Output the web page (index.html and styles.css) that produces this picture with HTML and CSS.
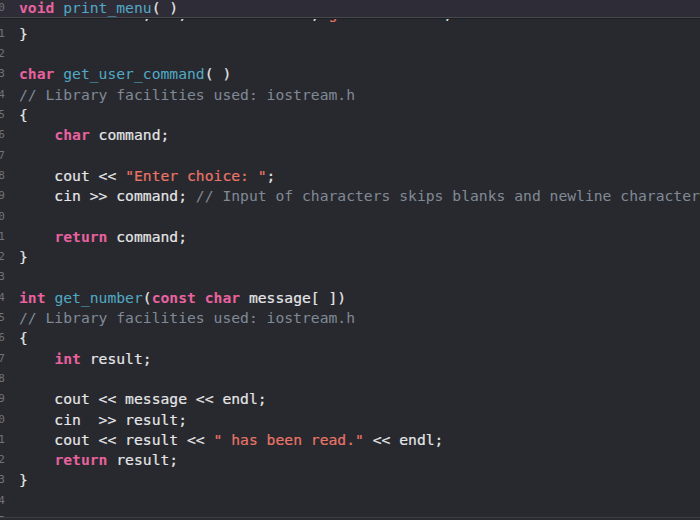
FILE: index.html
```html
<!DOCTYPE html>
<html>
<head>
<meta charset="utf-8">
<link rel="stylesheet" href="styles.css">
</head>
<body>
<div class="editor">
  <div class="sticky">
    <div class="row"><span class="ln">40</span><span class="src"><span class="kw">void</span> <span class="fn">print_menu</span>( )</span></div>
  </div>
  <div class="code">
    <div class="row partial"><span class="ln">40</span><span class="src">              ,   ,              , <span class="str">g</span>            ;</span></div>
    <div class="row"><span class="ln">41</span><span class="src">}</span></div>
    <div class="row"><span class="ln">42</span><span class="src"></span></div>
    <div class="row"><span class="ln">43</span><span class="src"><span class="kw">char</span> <span class="fn">get_user_command</span>( )</span></div>
    <div class="row"><span class="ln">44</span><span class="src"><span class="cm">// Library facilities used: iostream.h</span></span></div>
    <div class="row"><span class="ln">45</span><span class="src">{</span></div>
    <div class="row"><span class="ln">46</span><span class="src">    <span class="kw">char</span> command;</span></div>
    <div class="row"><span class="ln">47</span><span class="src"></span></div>
    <div class="row"><span class="ln">48</span><span class="src">    cout &lt;&lt; <span class="str">"Enter choice: "</span>;</span></div>
    <div class="row"><span class="ln">49</span><span class="src">    cin &gt;&gt; command; <span class="cm">// Input of characters skips blanks and newline characters</span></span></div>
    <div class="row"><span class="ln">50</span><span class="src"></span></div>
    <div class="row"><span class="ln">51</span><span class="src">    <span class="kw">return</span> command;</span></div>
    <div class="row"><span class="ln">52</span><span class="src">}</span></div>
    <div class="row"><span class="ln">53</span><span class="src"></span></div>
    <div class="row"><span class="ln">54</span><span class="src"><span class="kw">int</span> <span class="fn">get_number</span>(<span class="kw">const</span> <span class="kw">char</span> message[ ])</span></div>
    <div class="row"><span class="ln">55</span><span class="src"><span class="cm">// Library facilities used: iostream.h</span></span></div>
    <div class="row"><span class="ln">56</span><span class="src">{</span></div>
    <div class="row"><span class="ln">57</span><span class="src">    <span class="kw">int</span> result;</span></div>
    <div class="row"><span class="ln">58</span><span class="src"></span></div>
    <div class="row"><span class="ln">59</span><span class="src">    cout &lt;&lt; message &lt;&lt; endl;</span></div>
    <div class="row"><span class="ln">60</span><span class="src">    cin  &gt;&gt; result;</span></div>
    <div class="row"><span class="ln">61</span><span class="src">    cout &lt;&lt; result &lt;&lt; <span class="str">" has been read."</span> &lt;&lt; endl;</span></div>
    <div class="row"><span class="ln">62</span><span class="src">    <span class="kw">return</span> result;</span></div>
    <div class="row"><span class="ln">63</span><span class="src">}</span></div>
    <div class="row"><span class="ln">64</span><span class="src"></span></div>
    <div class="row"><span class="ln">65</span><span class="src"></span></div>
  </div>
  <div class="footer"></div>
</div>
</body>
</html>
```
FILE: styles.css
```css
html, body {
  margin: 0;
  padding: 0;
  background: #28292e;
  overflow: hidden;
}
.editor {
  width: 700px;
  height: 520px;
  display: flex;
  flex-direction: column;
  overflow: hidden;
  font-family: "DejaVu Sans Mono", "Liberation Mono", monospace;
  font-size: 14.7px;
  color: #e6e6e8;
}
.sticky {
  height: 17px;
  flex: none;
  overflow: hidden;
  background: #2e2d37;
  border-bottom: 1px solid #47484d;
  box-shadow: 0 1px 0 #1e1f23;
  position: relative;
  z-index: 1;
}
.sticky .row {
  line-height: 15px;
  height: 15px;
}
.code {
  flex: 1;
  overflow: hidden;
  margin-top: 1px;
}
.row {
  display: flex;
  line-height: 20.3px;
  height: 20.3px;
  white-space: pre;
}
.partial {
  margin-top: -15.45px;
}
.ln {
  flex: none;
  box-sizing: border-box;
  width: 33px;
  margin-left: -14px;
  padding-right: 14px;
  text-align: right;
  font-family: "DejaVu Sans Mono", monospace;
  font-size: 11px;
  color: #727278;
  overflow: hidden;
  -webkit-text-stroke: 0;
}
.src {
  flex: none;
  -webkit-text-stroke: 0.18px currentColor;
}
.kw {
  color: #e8629f;
  font-weight: bold;
  -webkit-text-stroke: 0;
}
.fn {
  color: #52a9c6;
  -webkit-text-stroke: 0;
}
.str {
  color: #ea7468;
}
.cm {
  color: #808a96;
  -webkit-text-stroke: 0;
}
.footer {
  flex: none;
  height: 2px;
  border-top: 1px solid #3d3e43;
  background: #2a2b2f;
}
```
